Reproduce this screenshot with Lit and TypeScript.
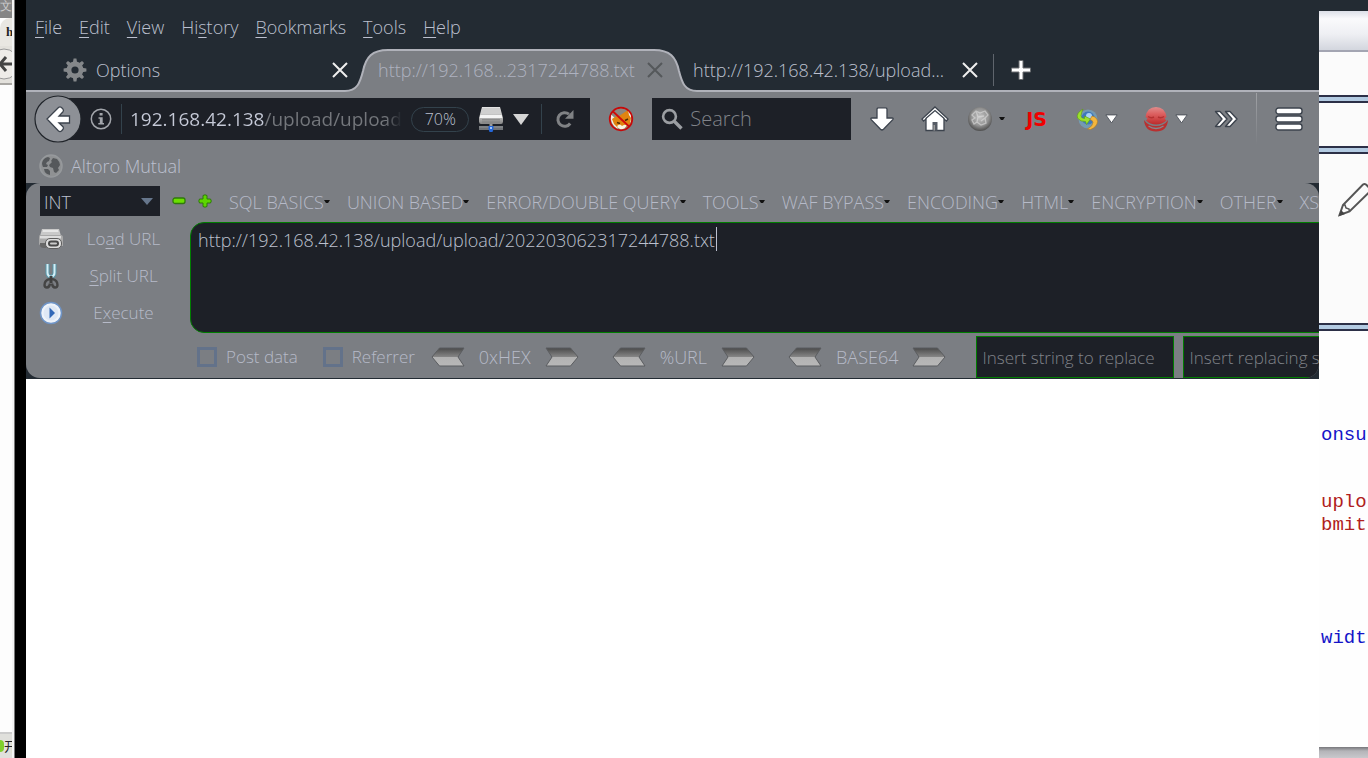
import { LitElement, html, css, svg } from "lit";
import { customElement } from "lit/decorators.js";

const menus: [string, string, string][] = [
  ["", "F", "ile"],
  ["", "E", "dit"],
  ["", "V", "iew"],
  ["Hi", "s", "tory"],
  ["", "B", "ookmarks"],
  ["", "T", "ools"],
  ["", "H", "elp"],
];

const hackMenus = [
  "SQL BASICS",
  "UNION BASED",
  "ERROR/DOUBLE QUERY",
  "TOOLS",
  "WAF BYPASS",
  "ENCODING",
  "HTML",
  "ENCRYPTION",
  "OTHER",
  "XSS",
];

const ink = "#3c434d";

const gear = html`<svg width="24" height="24" viewBox="0 0 24 24" aria-hidden="true">
  <g fill="#84878a">
    ${[0, 45, 90, 135, 180, 225, 270, 315].map(
      (a) => svg`<path transform="rotate(${a} 12 12)" d="M9.8 5 10.6 0.6H13.4L14.2 5Z" />`
    )}
    <path fill-rule="evenodd" d="M12 3.6a8.4 8.4 0 1 0 0 16.8 8.4 8.4 0 0 0 0-16.8Zm0 4.8a3.6 3.6 0 1 1 0 7.2 3.6 3.6 0 0 1 0-7.2Z" />
  </g>
</svg>`;

const cross = html`<svg width="16" height="16" viewBox="0 0 16 16" aria-hidden="true">
  <path d="M1 1 15 15M15 1 1 15" stroke="currentColor" stroke-width="2" fill="none" />
</svg>`;

const plus = html`<svg width="20" height="20" viewBox="0 0 20 20" aria-hidden="true">
  <path d="M8 .5h4V8h7.5v4H12v7.500H8V12H.5V8H8Z" fill="#fff" stroke="#6a6d70" />
</svg>`;

const back = html`<svg width="48" height="48" viewBox="0 0 48 48" aria-hidden="true">
  <circle cx="24" cy="24" r="23" fill="#8d9096" stroke="#20242a" stroke-width="1.2" />
  <path d="M13 24 24.500 12.500q1.500-1.300 3 0l1.500 1.600q1 1.400 0 2.600L25 21h10.500V28H25l4 3.700q1 1.400 0 2.600l-1.500 1.600q-1.500 1.200-3 0Z" fill="#fff" stroke="${ink}" stroke-width="1.3" />
</svg>`;

const info = html`<svg width="22" height="22" viewBox="0 0 22 22" aria-hidden="true">
  <circle cx="11" cy="11" r="9.700" fill="none" stroke="#a2a5ab" stroke-width="1.500" />
  <path d="M9.600 5h3v2.500h-3ZM8.500 9.200h4.200v5.800h1.300v1.600H8.300V15h1.500v-4.200H8.500Z" fill="#a2a5ab" />
</svg>`;

const drive = html`<svg width="26" height="26" viewBox="0 0 26 26" aria-hidden="true">
  <defs>
    <linearGradient id="dr" x1="0" y1="0" x2="0" y2="1">
      <stop offset="0" stop-color="#e4e4e4" /><stop offset=".6" stop-color="#b8b8b8" /><stop offset="1" stop-color="#858585" />
    </linearGradient>
  </defs>
  <path d="M4 1h18l3 11v3.500q0 2.500-2 2.500H3q-2 0-2-2.500V12Z" fill="url(#dr)" />
  <path d="M4.300 2h17.400l1.500 6H2.800Z" fill="#cfcfcf" />
  <path d="M2.200 9h21.600l.5 3H1.700Z" fill="#f4f4f4" />
  <path d="M4 13.800h18M4 16h18" stroke="#808080" stroke-width="1" />
  <path d="M1 20h24v4H1Z" fill="#6f7276" /><path d="M1 21h24" stroke="#8d9094" />
  <path d="M11.500 18h3v2h-3Z" fill="#999" />
  <path d="M10.500 20h5v3l-1 3h-3l-1-3Z" fill="#2466d8" /><path d="M12 21h2v2h-2Z" fill="#9cc6ff" />
</svg>`;

const reload = html`<svg width="20" height="20" viewBox="0 0 20 20" aria-hidden="true">
  <path d="M15.200 14.500A6.800 6.800 0 1 1 14 5.200" fill="none" stroke="#808285" stroke-width="3" />
  <path d="M18.500 1v8.800H10Z" fill="#808285" />
</svg>`;

const noFox = html`<svg width="26" height="26" viewBox="0 0 26 26" aria-hidden="true">
  <circle cx="13" cy="13" r="11" fill="#8b8781" />
  <path d="M2.500 8 8 13l4 8-3 1.500Q2 18 2.500 8ZM20 4l3 3v9l-3 2Z" fill="#f2efe8" />
  <path d="M4 13q3-3 7-3l9-6 1 5 2 3-1 6-4 3q-4 3-8 1l-4-4Z" fill="#e08410" />
  <path d="M9 20q3-3 5 0 3-2 5-1-2 4-6 4.500-3-.5-4-3.500Z" fill="#f9f3df" />
  <path d="M17 14.500l3-1.500M9 16.500l3 1" stroke="#4d2b06" stroke-width="1.500" />
  <path d="M5 5.500 21 20.500" stroke="#d00a0a" stroke-width="1.800" />
  <circle cx="13" cy="13" r="11.300" fill="none" stroke="#c80808" stroke-width="1.700" />
</svg>`;

const magnifier = html`<svg width="22" height="22" viewBox="0 0 22 22" aria-hidden="true">
  <circle cx="8.500" cy="8.500" r="6.400" fill="none" stroke="#9b9ea2" stroke-width="2.600" />
  <path d="M13 13l7.500 7.500" stroke="#9b9ea2" stroke-width="3.400" />
</svg>`;

const download = html`<svg width="26" height="26" viewBox="0 0 26 26" aria-hidden="true">
  <path d="M9.500 1.800h7q1.500 0 1.500 1.500V12h5q1.800 0 .8 1.600L14.500 23.300q-1.500 1.300-3 0L2.200 13.600Q1.200 12 3 12h5V3.300q0-1.500 1.500-1.500Z" fill="#fff" stroke="${ink}" stroke-width="1.300" />
</svg>`;

const home = html`<svg width="28" height="26" viewBox="0 0 28 26" aria-hidden="true">
  <path d="M14 1 27 13l-1.500 2L23 13v11.500H5V13L2.500 15 1 13Z" fill="#fff" stroke="${ink}" stroke-width="1.300" />
  <path d="M4.500 12.800 14 4.600l9.500 8.200" fill="none" stroke="${ink}" stroke-width="1.300" />
  <path d="M11.500 24.500V16h5v8.500Z" fill="#565c65" /><path d="M12.500 24.500V19h1.500v5.500Z" fill="#999" />
</svg>`;

const ball = html`<svg width="26" height="26" viewBox="0 0 26 26" aria-hidden="true">
  <defs><radialGradient id="bl" cx=".5" cy=".42" r=".6">
    <stop offset="0" stop-color="#c4c4c4" /><stop offset=".6" stop-color="#929292" /><stop offset="1" stop-color="#484848" />
  </radialGradient></defs>
  <circle cx="13" cy="13" r="12" fill="url(#bl)" />
  <path d="M5 9l4-4 4 2 5-2 3 4-3 3 1 5-5 2-4-3-3 2-2-4 3-2ZM9 5l2 6 6-1M11 11l-1 5M18 12l-4 3" fill="none" stroke="#dedede" stroke-width="1.300" opacity=".6" />
</svg>`;

const swirl = html`<svg width="24" height="24" viewBox="0 0 24 24" aria-hidden="true">
  <circle cx="13" cy="12" r="9.500" fill="#6fb0d8" opacity=".55" />
  <circle cx="13" cy="11" r="6.500" fill="#3f78bd" /><circle cx="14" cy="9" r="3" fill="#a9d2f2" />
  <path d="M8 2Q1 6 2.500 11q3 4 8 3.500l1 3 4-5.500-6-3v2.500Q5.500 11 6 8.500 6.500 5 8 2Z" fill="#9be02b" stroke="#5a9a14" stroke-width=".6" />
  <path d="M17 9q5 1 5.500 5.500Q22 20 15.500 22.500l-3-.5Q18 19 18 15.500q0-2-3-3Z" fill="#f4b63d" stroke="#b37c1c" stroke-width=".6" />
</svg>`;

const redBall = html`<svg width="26" height="26" viewBox="0 0 26 26" aria-hidden="true">
  <defs><linearGradient id="rb" x1="0" y1="0" x2="0" y2="1">
    <stop offset="0" stop-color="#e08c8c" /><stop offset=".4" stop-color="#dc6060" /><stop offset="1" stop-color="#bd2a2a" />
  </linearGradient></defs>
  <path d="M2.500 11Q4 1 13 1t10.500 10l-2 1.500 2 2Q19 18.500 13 18.500T3 14.500l1.500-2Z" fill="url(#rb)" />
  <path d="M1 14Q5 20 13 20t12-6Q24 25.500 13 25.500T1 14Z" fill="#b93030" />
  <path d="M5.500 20q3.500 2.500 7.500 2.500t7.500-2.500" stroke="#85888c" fill="none" stroke-width="1.300" />
  <path d="M5 10.500q3 2 6 .5M21 10.500q-3 2-6 .5" stroke="#b43232" fill="none" stroke-width="1.500" />
</svg>`;

const chevrons = html`<svg width="24" height="18" viewBox="0 0 24 18" aria-hidden="true">
  <path d="M1.500 1.500H6L13 9l-7 7.500H1.500L8 9ZM11.500 1.500H16L23 9l-7 7.500h-4.500L18 9Z" fill="#fff" stroke="${ink}" stroke-width="1.400" stroke-linejoin="round" />
</svg>`;

const burger = html`<svg width="28" height="24" viewBox="0 0 28 24" aria-hidden="true">
  <g fill="#fff" stroke="${ink}" stroke-width="1.400">
    <rect x="1" y="1" width="26" height="6" rx="2.500" /><rect x="1" y="9" width="26" height="6" rx="2.500" /><rect x="1" y="17" width="26" height="6" rx="2.500" />
  </g>
</svg>`;

const drop = html`<svg width="13" height="10" viewBox="0 0 14 11" aria-hidden="true">
  <path d="M.8 1h12.400L7 9.800Z" fill="#fff" stroke="#4a5058" />
</svg>`;

const tiny = html`<svg width="6" height="4" viewBox="0 0 6 4" aria-hidden="true"><path d="M0 0h6L4 3H2Z" fill="#111" /></svg>`;

const globe = html`<svg width="24" height="24" viewBox="0 0 24 24" aria-hidden="true">
  <circle cx="12" cy="12" r="11" fill="#8f9193" stroke="#96999c" stroke-width="1.500" />
  <path d="M3 9q1-5 6-6l2 1-1 3-2 1-1 2 2 1-1 2-4 0Q3 11 3 9ZM14 4l4 1q3 3 3 6l-2 3 1 2-3 3-2-1-1-4-3-1-1-2 3-3-1-1ZM5 15l4 0 2 2 0 4-3-1Q5 18 5 15Z" fill="#55585b" />
</svg>`;

const printer = html`<svg width="26" height="24" viewBox="0 0 26 24" aria-hidden="true">
  <path d="M4 2h17l2 7H2Z" fill="#c9c9c9" /><path d="M5 3h15l.5 2H4.500Z" fill="#e6e6e6" />
  <path d="M2 8h21q2 0 2 3v8H6q-4 0-5-2V10Q1 8 2 8Z" fill="#a9a9a9" /><path d="M2 9h21v2.500H2Z" fill="#dcdcdc" />
  <path d="M2 16h7v5H6q-4 0-4-3Z" fill="#686868" />
  <rect x="7.500" y="11.500" width="16" height="10" rx="4.500" fill="#ddd" stroke="#5d5d5d" />
  <rect x="11" y="14.500" width="9" height="4" rx="2" fill="#ccc" stroke="#4a4a4a" stroke-width="2" />
</svg>`;

const cutter = html`<svg width="18" height="26" viewBox="0 0 18 26" aria-hidden="true">
  <path d="M5.500 1v9q0 3 3.500 4 3.500-1 3.500-4V1" fill="none" stroke="#5896a8" stroke-width="4" />
  <path d="M5.500 1v9q0 3 3.500 4 3.500-1 3.500-4V1" fill="none" stroke="#d4eef6" stroke-width="2" />
  <path d="M9 13v7" stroke="#3f3f3f" stroke-width="3" />
  <path d="M8 16q-5.500 1-5.500 6 0 2.500 2.500 2.500T8 20.500M10 16q5.500 1 5.500 6 0 2.500-2.500 2.500T10 20.500" fill="none" stroke="#444" stroke-width="2.400" />
</svg>`;

const play = html`<svg width="24" height="24" viewBox="0 0 24 24" aria-hidden="true">
  <circle cx="12" cy="12" r="10.500" fill="#eef3fa" stroke="#6f94c6" stroke-width="1.500" />
  <circle cx="12" cy="12" r="7.500" fill="#dfe8f5" /><path d="M10.500 6.500 16 12l-5.500 5.500Z" fill="#3168b8" />
</svg>`;

const minus = html`<svg width="14" height="8" viewBox="0 0 14 8" aria-hidden="true">
  <rect x="1" y="1" width="12" height="5.500" rx="2" fill="#6be000" stroke="#2f7a0a" stroke-width="1.300" />
</svg>`;

const greenPlus = html`<svg width="14" height="14" viewBox="0 0 14 14" aria-hidden="true">
  <path d="M5 1.500 7 .8l2 .7V5h3.500l.8 2-.8 2H9v3.500l-2 .7-2-.7V9H1.500L.8 7l.7-2H5Z" fill="#5cd600" stroke="#2f7a0a" />
</svg>`;

const leftArrow = html`<svg width="34" height="20" viewBox="0 0 34 20" aria-hidden="true">
  <defs><linearGradient id="la" x1="0" y1="0" x2="0" y2="1">
    <stop offset="0" stop-color="#4a4a4a" /><stop offset=".48" stop-color="#858585" /><stop offset=".52" stop-color="#b2b2b2" /><stop offset="1" stop-color="#b8b8b8" />
  </linearGradient></defs>
  <path d="M8.500 1H33l-6 9 6 9H8.500L1 10Z" fill="url(#la)" stroke="#5b5d60" />
</svg>`;

const rightArrow = html`<svg width="34" height="20" viewBox="0 0 34 20" aria-hidden="true">
  <defs><linearGradient id="ra" x1="0" y1="0" x2="0" y2="1">
    <stop offset="0" stop-color="#4a4a4a" /><stop offset=".48" stop-color="#858585" /><stop offset=".52" stop-color="#b2b2b2" /><stop offset="1" stop-color="#b8b8b8" />
  </linearGradient></defs>
  <path d="M25.500 1H1l6 9-6 9h24.500L33 10Z" fill="url(#ra)" stroke="#5b5d60" />
</svg>`;

const pencil = html`<svg width="34" height="36" viewBox="0 0 34 36" aria-hidden="true">
  <g fill="none" stroke="#555" stroke-width="2">
    <path d="M2.500 33 6 23 26 2.500q1.500-1 3 0l4 4q1 1.500 0 3L12.500 29.500Z" /><path d="M6 23l2 0 1 3 3 1 .5 2.500" stroke-width="1.500" />
  </g>
  <path d="M2 34l2-6 4 4Z" fill="#444" />
</svg>`;

@customElement("app-root")
export class AppRoot extends LitElement {
  static styles = css`
    :host {
      display: grid;
      grid-template-columns: 26px minmax(0, 1fr) 49px;
      min-height: 100vh;
      background: #fff;
      font-family: "Open Sans", "Noto Sans", sans-serif;
      font-weight: 300;
      font-size: 17px;
      line-height: 24px;
      color: #bcc0cf;
      overflow: hidden;
    }
    * { box-sizing: border-box; }
    svg { display: block; flex: none; }
    button, input, textarea, select {
      font: inherit;
      color: inherit;
      background: none;
      border: 0;
      margin: 0;
      padding: 0;
      border-radius: 0;
      outline: 0;
    }
    button { flex: none; white-space: nowrap; }
    u { text-underline-offset: 3px; text-decoration-thickness: 1px; }

    /* window peeking out on the left */
    .left {
      display: grid;
      grid-template-columns: 12px 3px 11px;
      background: #000;
      overflow: hidden;
    }
    .edge { background: linear-gradient(90deg, #f4f4f4 2px, #777 2px); }
    .peek { display: flex; flex-direction: column; background: #fdfdfd; overflow: hidden; }
    .peek-title { height: 18px; background: #858585; color: #ccc; font-size: 12px; line-height: 12px; white-space: nowrap; }
    .peek-tab {
      height: 28px; padding-left: 6px; border-top-left-radius: 10px;
      background: #e9e7e2; color: #222; font: bold 13px/28px "Liberation Serif", serif;
    }
    .peek-bar { height: 39px; background: #e3e1dc; border-bottom: 2px solid #a9a7a3; }
    .peek-space { flex: 1; }
    .peek-foot {
      display: flex; align-items: center; height: 26px; border-top: 2px solid #ccc; background: #e0e0dc; color: #222;
      font: 13px/20px "Noto Sans CJK SC", sans-serif; white-space: nowrap;
    }
    .leaf { width: 4px; height: 12px; flex: none; background: #7fd02c; border-radius: 0 6px 6px 0; }

    /* browser */
    .browser { display: flex; flex-direction: column; min-width: 0; background: #fff; overflow: hidden; }
    .menubar {
      display: flex; align-items: center; gap: 17px; height: 49px; padding: 4px 9px 0;
      background: #232b33; font-size: 18px;
    }
    .tabs {
      display: flex; height: 43px; padding-left: 22px; background: #232b33;
      border-bottom: 2px solid #b0b2ba; font-size: 18px;
    }
    .tab {
      position: relative; display: flex; align-items: center; gap: 9px;
      width: 315px; height: 41px; padding: 0 15px; flex: none;
    }
    .tab-label { position: relative; flex: 1; text-align: left; white-space: nowrap; }
    .tab-close { position: relative; color: #eee; }
    .shape { position: absolute; left: -18px; top: 0; }
    .active { color: #aeb2c0; }
    .active .tab-close { color: #55585b; }
    .newtab { align-self: center; height: 32px; padding: 0 17px; border-left: 1px solid #5f656d; }

    .toolbar { display: flex; align-items: center; height: 54px; padding: 0 16px 0 8px; background: #7b7e83; }
    .back { position: relative; z-index: 1; }
    .urlbar {
      display: flex; align-items: center; flex: 1; min-width: 0; height: 42px;
      margin-left: -24px; padding: 0 15px 0 32px; background: #1d2027;
    }
    .sep { width: 1px; height: 30px; background: #33424c; flex: none; }
    .url-sep { margin: 0 8px 0 9px; }
    .url {
      flex: 1; min-width: 0; font-size: 19px; font-weight: 400; color: transparent;
      background: linear-gradient(90deg, #c6cad8 135px, #74777c 135px);
      -webkit-background-clip: text; background-clip: text;
      -webkit-mask-image: linear-gradient(90deg, #000 94%, transparent);
    }
    .zoom {
      width: 58px; height: 25px; margin: 0 9px; border: 1px solid #33424c; border-radius: 13px;
      font-size: 16px; line-height: 22px;
    }
    .hist { margin: 0 12px 0 9px; }
    .reload { margin-left: 13px; }
    .blocker { margin: 0 18px; }
    .search {
      display: flex; align-items: center; gap: 7px; width: 199px; height: 42px; padding: 0 9px;
      background: #1d2027; flex: none;
    }
    .search-input { width: 140px; font-size: 20px; }
    ::placeholder { color: #808389; opacity: 1; }
    .tools { display: flex; align-items: center; flex: none; padding-left: 18px; }
    .home { margin: 0 18px 0 26px; }
    .pair { display: flex; align-items: center; gap: 6px; }
    .js { margin: 0 28px 0 21px; color: #f00000; font: 900 19px/24px "DejaVu Sans", sans-serif; }
    .snd { margin-left: 25px; }
    .more { margin: 0 18px 0 26px; }
    .menu-sep { width: 1px; height: 52px; background: linear-gradient(#a0a2a6, #7b7e83); }
    .burger { margin-left: 18px; }

    .bookmarks { display: flex; align-items: center; height: 37px; padding: 2px 13px 0; background: #7b7e83; }
    .bookmark { display: flex; align-items: center; gap: 8px; color: inherit; text-decoration: none; font-size: 18px; }

    /* injection toolbar */
    .dock { background: #232b33; padding-bottom: 1px; }
    .hack { border-radius: 14px; background: #7b7e83; overflow: hidden; color: #b6bac8; }
    .row { display: flex; align-items: center; height: 39px; padding: 0 0 3px 14px; white-space: nowrap; }
    .picker { position: relative; flex: none; }
    .picker-select { display: block; appearance: none; width: 120px; height: 30px; padding: 2px 4px 0; background: #1d2027; color: #bcc0cf; font-size: 18px; }
    .picker-mark { position: absolute; right: 7px; top: 12px; pointer-events: none; }
    .pm { display: flex; align-items: center; gap: 12px; padding: 0 17px 0 12px; }
    .hmenus { display: flex; gap: 17px; padding-top: 2px; font-size: 18px; }
    .hmenu { display: flex; align-items: center; }
    .body { display: grid; grid-template-columns: 164px 1fr; }
    .side { display: flex; flex-direction: column; margin-top: -2px; }
    .act { display: grid; grid-template-columns: 28px 1fr; align-items: center; height: 37px; padding: 0 18px 0 11px; column-gap: 10px; }
    .act svg { justify-self: center; }
    .field { position: relative; }
    .area {
      display: block; width: calc(100% + 16px); height: 111px; padding: 5px 7px; resize: none; font-size: 18px;
      border: 1px solid #007d00; border-radius: 14px; background: #1d2027; color: #bcc0cf; white-space: nowrap; overflow: hidden;
    }
    .caret { position: absolute; left: 526px; top: 5px; width: 1px; height: 24px; background: #bcc0cf; }
    .opts { display: flex; align-items: flex-end; height: 45px; padding-left: 171px; white-space: nowrap; }
    .opt { display: flex; align-items: center; gap: 9px; height: 42px; }
    .opt + .opt { margin-left: 25px; }
    .box { appearance: none; width: 20px; height: 20px; border: 3px solid #63728a; flex: none; }
    .codec { display: flex; align-items: center; gap: 14px; height: 42px; font-size: 18px; }
    .first { margin-left: 16px; }
    .codec + .codec { margin-left: 33px; }
    .rep { flex: none; width: 198px; height: 42px; padding: 0 5px; border: 1px solid #007d00; background: #1d2027; }
    .rep-a { margin: 0 9px 0 30px; }
    .page { flex: 1; background: #fff; }

    /* window peeking out on the right */
    .right { display: flex; flex-direction: column; background: #fefefe; overflow: hidden; }
    .r-top { height: 11px; background: #232b33; }
    .r-head { height: 41px; background: linear-gradient(#dcdfe8, #fafafc 20%, #eeeff3 60%, #d3d6de); border-bottom: 2px solid #a3a5b2; }
    .r-bar { height: 8px; border: 2px solid #2c3047; border-width: 2px 0; background: #b3cbe2; flex: none; }
    .r-a { height: 43px; background: #fbfbfb; }
    .r-c { height: 169px; padding: 28px 0 0 18px; background: #fbfbfb; }
    .code { flex: 1; padding: 93px 0 0 2px; font: 19px/23px "Liberation Mono", monospace; }
    .blue { color: #1414c8; }
    .red { color: #b02020; }
    .line { height: 23px; }
    .gap-s { height: 44px; }
    .gap-l { height: 90px; }
    .r-foot { height: 11px; background: linear-gradient(#77777b, #b4b4b8 4px, #c8c8cc); }
  `;

  tab(label: string, icon: unknown = "", active = false) {
    return html`<div class="tab ${active ? "active" : ""}" role="tab" aria-selected=${active}>
      ${active
        ? html`<svg class="shape" width="352" height="43" viewBox="0 0 352 43" aria-hidden="true">
            <path d="M0 43V42C12 42 15 34 18 22 21 8 27 1 43 1H309C325 1 331 8 334 22 337 34 340 42 352 42V43Z" fill="#7b7e83" />
            <path d="M0 42C12 42 15 34 18 22 21 8 27 1 43 1H309C325 1 331 8 334 22 337 34 340 42 352 42" fill="none" stroke="#b0b2ba" stroke-width="2" />
          </svg>`
        : ""}
      ${icon}
      <span class="tab-label">${label}</span>
      <button class="tab-close" aria-label="Close tab">${cross}</button>
    </div>`;
  }

  codec(name: string, first = false) {
    return html`<div class="codec ${first ? "first" : ""}">
      <button aria-label="Decode ${name}">${leftArrow}</button>
      <span>${name}</span>
      <button aria-label="Encode ${name}">${rightArrow}</button>
    </div>`;
  }

  render() {
    return html`
      <aside class="left">
        <div class="peek">
          <div class="peek-title">文件</div>
          <div class="peek-tab">h</div>
          <div class="peek-bar">
            <svg width="12" height="37" viewBox="0 0 12 37" aria-hidden="true">
              <circle cx="4" cy="18" r="15" fill="#eeece8" stroke="#999" />
              <path d="M12 18H1M6 11l-6 7 6 7" fill="none" stroke="#444" stroke-width="3" />
            </svg>
          </div>
          <div class="peek-space"></div>
          <div class="peek-foot"><span class="leaf"></span>开</div>
        </div>
        <div class="edge"></div>
      </aside>

      <main class="browser">
        <nav class="menubar">
          ${menus.map(([a, k, b]) => html`<button>${a}<u>${k}</u>${b}</button>`)}
        </nav>
        <div class="tabs" role="tablist">
          ${this.tab("Options", gear)}
          ${this.tab("http://192.168...2317244788.txt", "", true)}
          ${this.tab("http://192.168.42.138/upload...")}
          <button class="newtab" aria-label="New tab">${plus}</button>
        </div>
        <div class="toolbar">
          <button class="back" aria-label="Back">${back}</button>
          <div class="urlbar">
            <button aria-label="Site information">${info}</button>
            <span class="sep url-sep"></span>
            <input class="url" aria-label="Address" value="192.168.42.138/upload/upload/202203062317244788.txt" />
            <button class="zoom">70%</button>
            ${drive}
            <button class="hist" aria-label="History">
              <svg width="16" height="11" viewBox="0 0 16 11" aria-hidden="true"><path d="M0 0h16L8 11Z" fill="#d5d5d5" /></svg>
            </button>
            <span class="sep"></span>
            <button class="reload" aria-label="Reload">${reload}</button>
          </div>
          <button class="blocker" aria-label="Blocker">${noFox}</button>
          <label class="search">${magnifier}<input class="search-input" aria-label="Search" placeholder="Search" /></label>
          <div class="tools">
            <button aria-label="Downloads">${download}</button>
            <button class="home" aria-label="Home">${home}</button>
            <button class="pair" aria-label="Proxy">${ball}${tiny}</button>
            <button class="js">JS</button>
            <button class="pair" aria-label="Sync">${swirl}${drop}</button>
            <button class="pair snd" aria-label="Agent">${redBall}${drop}</button>
            <button class="more" aria-label="More tools">${chevrons}</button>
            <span class="menu-sep"></span>
            <button class="burger" aria-label="Menu">${burger}</button>
          </div>
        </div>
        <div class="bookmarks"><a class="bookmark" href="#">${globe}Altoro Mutual</a></div>

        <div class="dock">
          <section class="hack">
            <div class="row">
              <div class="picker">
                <select class="picker-select" aria-label="Type"><option>INT</option></select>
                <svg class="picker-mark" width="12" height="7" viewBox="0 0 12 7" aria-hidden="true"><path d="M0 0h12L6 7Z" fill="#66768c" /></svg>
              </div>
              <div class="pm">
                <button aria-label="Decrease">${minus}</button>
                <button aria-label="Increase">${greenPlus}</button>
              </div>
              <div class="hmenus">${hackMenus.map((m) => html`<button class="hmenu">${m}${tiny}</button>`)}</div>
            </div>
            <div class="body">
              <div class="side">
                <button class="act">${printer}<span>Lo<u>a</u>d URL</span></button>
                <button class="act">${cutter}<span><u>S</u>plit URL</span></button>
                <button class="act">${play}<span>E<u>x</u>ecute</span></button>
              </div>
              <div class="field">
                <textarea class="area" aria-label="URL" .value=${"http://192.168.42.138/upload/upload/202203062317244788.txt"}></textarea>
                <span class="caret"></span>
              </div>
            </div>
            <div class="opts">
              <label class="opt"><input class="box" type="checkbox" />Post data</label>
              <label class="opt"><input class="box" type="checkbox" />Referrer</label>
              ${this.codec("0xHEX", true)}${this.codec("%URL")}${this.codec("BASE64")}
              <input class="rep rep-a" aria-label="Search string" placeholder="Insert string to replace" />
              <input class="rep" aria-label="Replacement" placeholder="Insert replacing string" />
            </div>
          </section>
        </div>
        <div class="page"></div>
      </main>

      <aside class="right">
        <div class="r-top"></div>
        <div class="r-head"></div>
        <div class="r-a"></div>
        <div class="r-bar"></div>
        <div class="r-a"></div>
        <div class="r-bar"></div>
        <div class="r-c">${pencil}</div>
        <div class="r-bar"></div>
        <div class="code">
          <div class="line blue">onsu</div>
          <div class="gap-s"></div>
          <div class="line red">uplo</div>
          <div class="line red">bmit</div>
          <div class="gap-l"></div>
          <div class="line blue">widt</div>
        </div>
        <div class="r-foot"></div>
      </aside>
    `;
  }
}
